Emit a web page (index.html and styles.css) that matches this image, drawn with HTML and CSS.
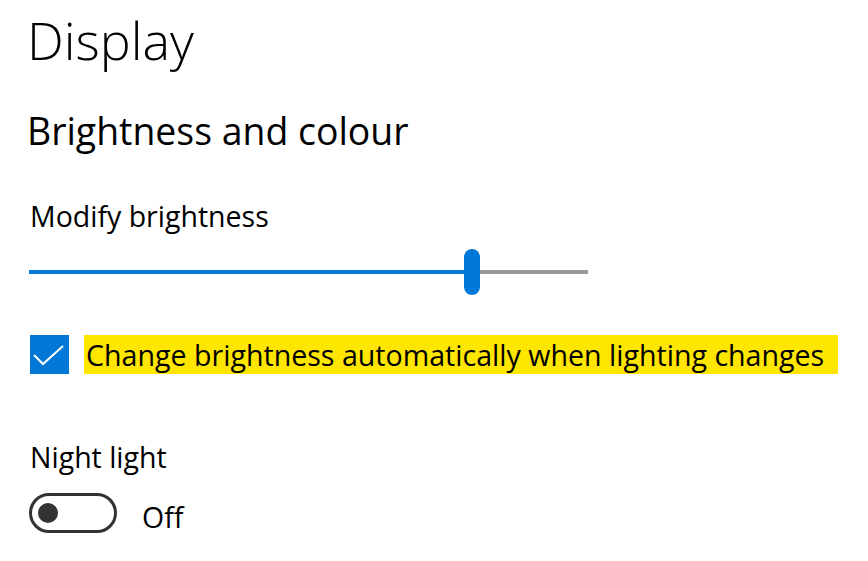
FILE: index.html
```html
<!DOCTYPE html>
<html>
<head>
<meta charset="utf-8">
<link rel="stylesheet" href="styles.css">
</head>
<body>
<main class="page">
  <h1 class="title">Display</h1>
  <h2 class="section">Brightness and colour</h2>
  <div class="label">Modify brightness</div>
  <div class="slider">
    <div class="track-fill"></div>
    <div class="thumb"></div>
    <div class="track-rest"></div>
  </div>
  <label class="check-row">
    <span class="checkbox">
      <svg width="39" height="39" viewBox="0 0 39 39"><path d="M4 20 L13 29 L33 11" fill="none" stroke="#fff" stroke-width="2"/></svg>
    </span>
    <span class="check-text">Change brightness automatically when lighting changes</span>
  </label>
  <div class="label night">Night light</div>
  <div class="toggle-row">
    <span class="toggle"><span class="knob"></span></span>
    <span class="toggle-text">Off</span>
  </div>
</main>
</body>
</html>
```
FILE: styles.css
```css
html, body {
  margin: 0;
  padding: 0;
  background: #fff;
}
.page {
  font-family: "Open Sans", "Noto Sans", sans-serif;
  color: #000;
  padding: 14px 0 0 27px;
  display: flex;
  flex-direction: column;
  align-items: flex-start;
}
.title {
  margin: 0;
  font-weight: 300;
  font-size: 52px;
  line-height: 52px;
}
.section {
  margin: 46px 0 0 0;
  font-weight: 400;
  font-size: 37.4px;
  line-height: 37px;
}
.label {
  margin: 53px 0 0 3px;
  font-size: 28.5px;
  line-height: 28px;
}
.slider {
  margin: 19px 0 0 2px;
  display: flex;
  align-items: center;
  height: 46px;
}
.track-fill {
  width: 435px;
  height: 4px;
  background: #0078d7;
}
.thumb {
  width: 16px;
  height: 46px;
  border-radius: 8px;
  background: #0078d7;
}
.track-rest {
  width: 108px;
  height: 4px;
  background: #999;
}
.check-row {
  margin: 40px 0 0 3px;
  display: flex;
  align-items: center;
  gap: 15px;
}
.checkbox {
  width: 39px;
  height: 39px;
  background: #0078d7;
  display: block;
}
.checkbox svg {
  display: block;
}
.check-text {
  background: #ffe600;
  font-size: 28.6px;
  line-height: 39px;
  padding: 0 14px 0 2px;
}
.night {
  margin-top: 69px;
}
.toggle-row {
  margin: 22px 0 0 2px;
  display: flex;
  align-items: flex-start;
  gap: 25px;
}
.toggle {
  box-sizing: border-box;
  width: 88px;
  height: 40px;
  border: 3px solid #333;
  border-radius: 20px;
  display: flex;
  align-items: center;
  padding-left: 6px;
}
.knob {
  width: 20px;
  height: 20px;
  border-radius: 50%;
  background: #333;
}
.toggle-text {
  font-size: 28.5px;
  line-height: 40px;
  padding-top: 4px;
}
```
